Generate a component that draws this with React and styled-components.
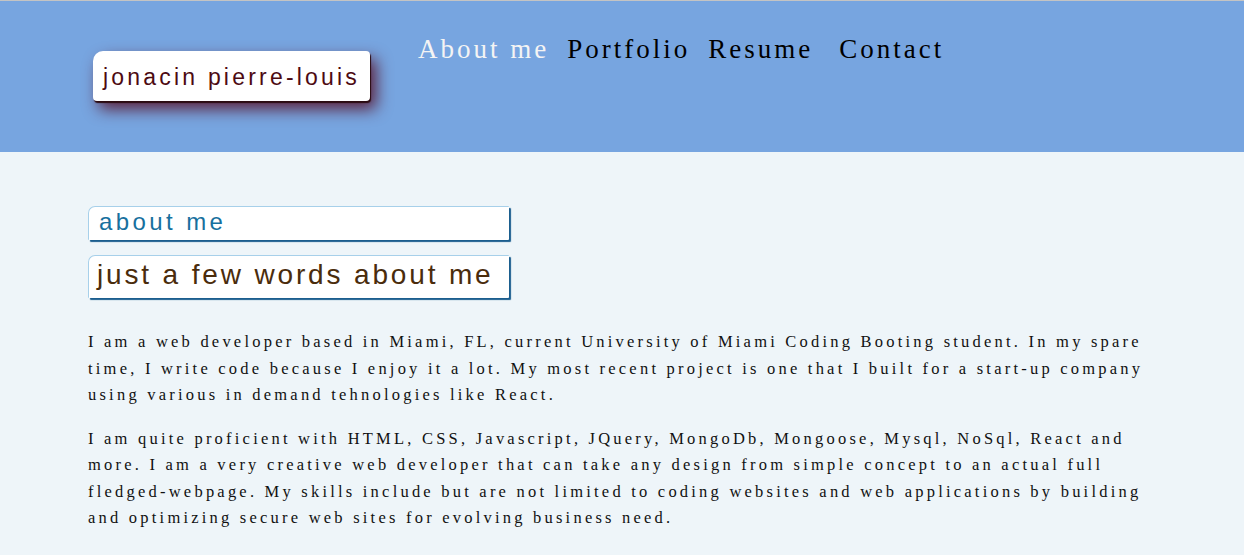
import React from "react";
import styled, { createGlobalStyle } from "styled-components";

const Global = createGlobalStyle`
  html, body { margin: 0; padding: 0; }
  body { background: #eef5f9; font-family: "Liberation Serif", "Times New Roman", serif; }
`;

const Header = styled.header`
  background: #77a5e0;
  border-top: 1px solid #c4c4c4;
  height: 151px;
  display: flex;
  align-items: flex-start;
  padding-left: 93px;
  box-sizing: content-box;
`;

const Logo = styled.div`
  margin-top: 50px;
  width: 277px;
  height: 50px;
  box-sizing: border-box;
  background: #fff;
  border-radius: 10px 4px 4px 4px;
  box-shadow: 1px 2px 1px #2a0a10, 6px 8px 16px #5b1f3a;
  display: flex;
  align-items: center;
  padding-left: 10px;
  padding-top: 2px;
  font-family: "Liberation Sans", Arial, sans-serif;
  font-size: 23px;
  letter-spacing: 3.2px;
  color: #4d0a12;
  white-space: nowrap;
`;

const Nav = styled.nav`
  display: flex;
  margin-left: 48px;
  margin-top: 33px;
  gap: 18px;
`;

const NavLink = styled.a`
  font-family: "Liberation Serif", "Times New Roman", serif;
  font-size: 27px;
  letter-spacing: 3px;
  color: ${(p) => (p.$active ? "#f4f4f4" : "#000")};
  text-decoration: none;
  margin-left: ${(p) => (p.$extra ? "8px" : "0")};
  white-space: nowrap;
`;

const Main = styled.main`
  padding: 54px 88px 0 88px;
`;

const TitleBox = styled.div`
  width: 421px;
  height: ${(p) => p.$h}px;
  box-sizing: border-box;
  background: #fff;
  border-top: 1px solid #a7d0ea;
  border-left: 1px solid #a7d0ea;
  border-radius: 7px 1px 1px 1px;
  box-shadow: 2px 2px 1px #1b5e8e;
  margin-bottom: ${(p) => p.$mb}px;
  display: flex;
  align-items: center;
  padding-left: ${(p) => p.$pl}px;
  padding-bottom: ${(p) => p.$pb}px;
  font-family: "Liberation Sans", Arial, sans-serif;
  font-size: ${(p) => p.$size}px;
  letter-spacing: ${(p) => p.$ls}px;
  color: ${(p) => p.$color};
  white-space: nowrap;
`;

const Para = styled.p`
  margin: 0 0 17px 0;
  font-family: "Liberation Serif", "Times New Roman", serif;
  font-size: 16.5px;
  line-height: 26.5px;
  letter-spacing: 3.22px;
  color: #111;
`;

const Body = styled.div`
  padding-top: 4px;
`;

export default function App() {
  return (
    <>
      <Global />
      <Header>
        <Logo>jonacin pierre-louis</Logo>
        <Nav>
          <NavLink $active>About me</NavLink>
          <NavLink>Portfolio</NavLink>
          <NavLink>Resume</NavLink>
          <NavLink $extra>Contact</NavLink>
        </Nav>
      </Header>
      <Main>
        <TitleBox $h={34} $mb={15} $pl={10} $pb={3} $size={24} $ls={3.4} $color="#17709e">
          about me
        </TitleBox>
        <TitleBox $h={43} $mb={27} $pl={8} $pb={4} $size={28} $ls={2.85} $color="#4a2c0c">
          just a few words about me
        </TitleBox>
        <Body>
          <Para>
            I am a web developer based in Miami, FL, current University of Miami Coding Booting student. In my spare time, I write code because I enjoy it a lot. My most recent project is one that I built for a start-up company using various in demand tehnologies like React.
          </Para>
          <Para>
            I am quite proficient with HTML, CSS, Javascript, JQuery, MongoDb, Mongoose, Mysql, NoSql, React and more. I am a very creative web developer that can take any design from simple concept to an actual full fledged-webpage. My skills include but are not limited to coding websites and web applications by building and optimizing secure web sites for evolving business need.
          </Para>
        </Body>
      </Main>
    </>
  );
}
